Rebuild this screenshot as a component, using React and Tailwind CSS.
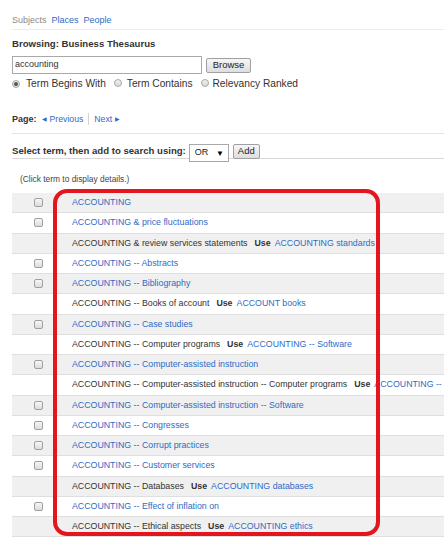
import React from "react";

const rows = [
  { t: "ACCOUNTING", link: true },
  { t: "ACCOUNTING & price fluctuations", link: true },
  { t: "ACCOUNTING & review services statements", use: "ACCOUNTING standards" },
  { t: "ACCOUNTING -- Abstracts", link: true },
  { t: "ACCOUNTING -- Bibliography", link: true },
  { t: "ACCOUNTING -- Books of account", use: "ACCOUNT books" },
  { t: "ACCOUNTING -- Case studies", link: true },
  { t: "ACCOUNTING -- Computer programs", use: "ACCOUNTING -- Software" },
  { t: "ACCOUNTING -- Computer-assisted instruction", link: true },
  {
    t: "ACCOUNTING -- Computer-assisted instruction -- Computer programs",
    use: "ACCOUNTING -- C",
  },
  { t: "ACCOUNTING -- Computer-assisted instruction -- Software", link: true },
  { t: "ACCOUNTING -- Congresses", link: true },
  { t: "ACCOUNTING -- Corrupt practices", link: true },
  { t: "ACCOUNTING -- Customer services", link: true },
  { t: "ACCOUNTING -- Databases", use: "ACCOUNTING databases" },
  { t: "ACCOUNTING -- Effect of inflation on", link: true },
  { t: "ACCOUNTING -- Ethical aspects", use: "ACCOUNTING ethics" },
];

function Radio({ checked }) {
  return (
    <span className="relative inline-flex h-[8px] w-[8px] shrink-0 items-center justify-center rounded-full border border-[#a8a8a8] bg-gradient-to-b from-[#f2f2f2] to-[#d8d8d8]">
      {checked && <span className="h-[4px] w-[4px] rounded-full bg-[#555]" />}
    </span>
  );
}

function Checkbox() {
  return (
    <span className="block h-[9px] w-[9px] rounded-[2px] border border-[#a0a0a0] bg-gradient-to-b from-[#f6f6f6] to-[#dcdcdc]" />
  );
}

export default function App() {
  return (
    <div
      className="relative min-h-[537px] w-[444px] overflow-hidden bg-white pl-[12px] text-[#333]"
      style={{ fontFamily: '"Liberation Sans", Arial, sans-serif' }}
    >
      {/* top nav */}
      <div className="flex h-[30px] items-end gap-[5px] border-b border-[#ececec] pb-[3px] text-[9px] leading-[11px]">
        <span className="text-[#8a8a8a]">Subjects</span>
        <span className="text-[#2e6bc6]">Places</span>
        <span className="text-[#2e6bc6]">People</span>
      </div>

      <div className="mt-[8px] text-[9.6px] font-bold leading-[12px] text-[#333]">
        Browsing: Business Thesaurus
      </div>

      <div className="mt-[6px] flex items-start">
        <div className="flex h-[18px] w-[190px] items-center border border-[#a9a9a9] pl-[2px] text-[9px] text-[#333]">
          accounting
        </div>
        <div className="ml-[4px] mt-[2px] flex h-[15px] w-[45px] items-center justify-center rounded-[2px] border border-[#a0a0a0] bg-gradient-to-b from-[#f6f6f6] to-[#dedede] text-[9.5px] text-[#222]">
          Browse
        </div>
      </div>

      <div className="mt-[4px] flex h-[12px] items-center text-[10.2px] leading-[12px] text-[#333]">
        <Radio checked />
        <span className="ml-[6px]">Term Begins With</span>
        <span className="ml-[8px]">
          <Radio />
        </span>
        <span className="ml-[5px]">Term Contains</span>
        <span className="ml-[8px]">
          <Radio />
        </span>
        <span className="ml-[4px]">Relevancy Ranked</span>
      </div>

      {/* paging */}
      <div className="mt-[23px] flex h-[21px] items-start border-b border-[#e4e4e4] text-[8.7px] leading-[12px]">
        <span className="text-[9px] font-bold text-[#333]">Page:</span>
        <span className="ml-[5px] flex items-center text-[#2e6bc6]">
          <span className="mr-[3px] text-[6px]">◀</span>Previous
        </span>
        <span className="mx-[5px] h-[12px] w-px bg-[#d4d4d4]" />
        <span className="flex items-center text-[#2e6bc6]">
          Next<span className="ml-[3px] text-[6px]">▶</span>
        </span>
      </div>

      {/* select row */}
      <div className="flex h-[25px] items-start border-b border-[#d8d8d8]">
        <span className="mt-[11px] text-[9.6px] font-bold leading-[12px] text-[#333]">
          Select term, then add to search using:
        </span>
        <div className="relative ml-[3px] mt-[10px] flex h-[18px] w-[40px] items-center border border-[#a9a9a9] bg-white pl-[5px] text-[9px] text-[#222]">
          OR
          <span className="absolute right-[4px] top-[3px] text-[8px] text-black">▼</span>
        </div>
        <div className="ml-[4px] mt-[10px] flex h-[15px] w-[27px] items-center justify-center rounded-[2px] border border-[#a0a0a0] bg-gradient-to-b from-[#f6f6f6] to-[#dedede] text-[9.5px] text-[#222]">
          Add
        </div>
      </div>

      <div className="ml-[8px] mt-[14px] text-[8.4px] leading-[12px] text-[#444]">
        (Click term to display details.)
      </div>

      {/* results */}
      <div className="mt-[8px]">
        {rows.map((r, i) => (
          <div
            key={i}
            className={
              "flex h-[20.25px] items-center whitespace-nowrap border-b border-[#dfdfdf] text-[8.8px] " +
              (i % 2 === 0 ? "bg-[#f0f0f0]" : "bg-white")
            }
          >
            <div className="flex w-[60px] shrink-0 justify-start pl-[22px]">
              {r.link && <Checkbox />}
            </div>
            {r.link ? (
              <span className="text-[#2e6bc6]">{r.t}</span>
            ) : (
              <>
                <span className="text-[#333]">{r.t}</span>
                <span className="ml-[7px] font-bold text-[#333]">Use</span>
                <span className="ml-[4px] text-[#2e6bc6]">{r.use}</span>
              </>
            )}
          </div>
        ))}
      </div>

      {/* red annotation */}
      <div className="pointer-events-none absolute left-[53px] top-[189px] h-[347px] w-[327px] rounded-[14px] border-[4px] border-[#e3161f]" />
    </div>
  );
}
